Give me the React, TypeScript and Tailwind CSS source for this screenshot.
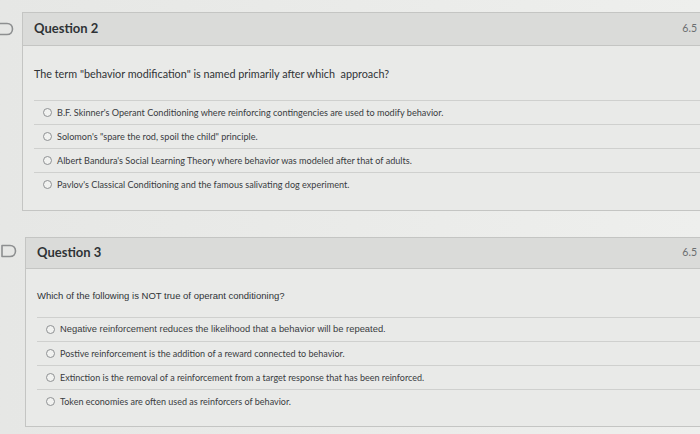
import React from "react";

type Question = {
  title: string;
  points: string;
  prompt: string;
  promptClass: string;
  options: { text: string; cls: string }[];
};

const lato = "font-['Lato','Liberation_Sans',sans-serif]";
const arial = "font-['Liberation_Sans','Arial',sans-serif]";

const questions: Question[] = [
  {
    title: "Question 2",
    points: "6.5",
    prompt: 'The term "behavior modification" is named primarily after which  approach?',
    promptClass: `${lato} text-[10.8px] mb-[19px]`,
    options: [
      { text: "B.F. Skinner's Operant Conditioning where reinforcing contingencies are used to modify behavior.", cls: `${lato} text-[9.1px]` },
      { text: 'Solomon\'s "spare the rod, spoil the child" principle.', cls: `${lato} text-[9.1px]` },
      { text: "Albert Bandura's Social Learning Theory where behavior was modeled after that of adults.", cls: `${lato} text-[9.1px]` },
      { text: "Pavlov's Classical Conditioning and the famous salivating dog experiment.", cls: `${lato} text-[9.1px]` },
    ],
  },
  {
    title: "Question 3",
    points: "6.5",
    prompt: "Which of the following is NOT true of operant conditioning?",
    promptClass: `${arial} text-[9.5px] mb-[14px]`,
    options: [
      { text: "Negative reinforcement reduces the likelihood that a behavior will be repeated.", cls: `${arial} text-[9.4px]` },
      { text: "Postive reinforcement is the addition of a reward connected to behavior.", cls: `${lato} text-[9px]` },
      { text: "Extinction is the removal of a reinforcement from a target response that has been reinforced.", cls: `${lato} text-[9px]` },
      { text: "Token economies are often used as reinforcers of behavior.", cls: `${lato} text-[9px]` },
    ],
  },
];

// outline bookmark flag shown left of each question
const FlagIcon = () => (
  <svg width="16" height="14" viewBox="0 0 16 14" fill="none">
    <path
      d="M1 1.5 H9 C12.5 1.5 14.5 4 14.5 7 C14.5 10 12.5 12.5 9 12.5 H1 Z"
      stroke="#8d8f90"
      strokeWidth="1.6"
      strokeLinejoin="round"
    />
  </svg>
);

const Radio = () => (
  <span className="w-[9px] h-[9px] rounded-full border border-[#8f9193] bg-[#f1f2f0] shrink-0" />
);

const QuestionCard = ({
  q,
  flagClass,
  headerClass,
  bodyClass,
}: {
  q: Question;
  flagClass: string;
  headerClass: string;
  bodyClass: string;
}) => (
  <div className="flex">
    <div className={flagClass}>
      <FlagIcon />
    </div>
    <div className="flex-1 border border-r-0 border-[#c4c5c3] bg-[#e9eae8]">
      {/* Header */}
      <div className={`flex items-center justify-between bg-[#dadbd9] border-b border-[#c4c5c3] pl-[11px] pr-[3px] ${lato} ${headerClass}`}>
        <span className="text-[13px] font-bold text-[#2f3336]">{q.title}</span>
        <span className="text-[10.5px] text-[#6b6e70]">{q.points}</span>
      </div>

      {/* Body */}
      <div className={`pl-[11px] ${bodyClass}`}>
        <p className={`leading-[14px] text-[#2f3336] whitespace-pre-wrap ${q.promptClass}`}>{q.prompt}</p>
        <div className="flex flex-col">
          {q.options.map((o) => (
            <div key={o.text} className="flex items-center gap-[5px] h-[24px] border-t border-[#cfd0ce] pl-[9px]">
              <Radio />
              <span className={`text-[#393c3f] ${o.cls}`}>{o.text}</span>
            </div>
          ))}
        </div>
      </div>
    </div>
  </div>
);

export default function App() {
  return (
    <div className="w-[700px] h-[434px] overflow-hidden bg-gradient-to-r from-[#e6e7e5] to-[#eeefed]">
      <div className="pt-[12px]">
        <QuestionCard
          q={questions[0]}
          flagClass="w-[24px] pt-[10px] ml-[-2px]"
          headerClass="h-[33px]"
          bodyClass="pt-[21px] pb-[14px]"
        />
      </div>
      <div className="pt-[26px]">
        <QuestionCard
          q={questions[1]}
          flagClass="w-[25px] pt-[7px] pl-[1px]"
          headerClass="h-[31px]"
          bodyClass="pt-[20px] pb-[13px]"
        />
      </div>
    </div>
  );
}
